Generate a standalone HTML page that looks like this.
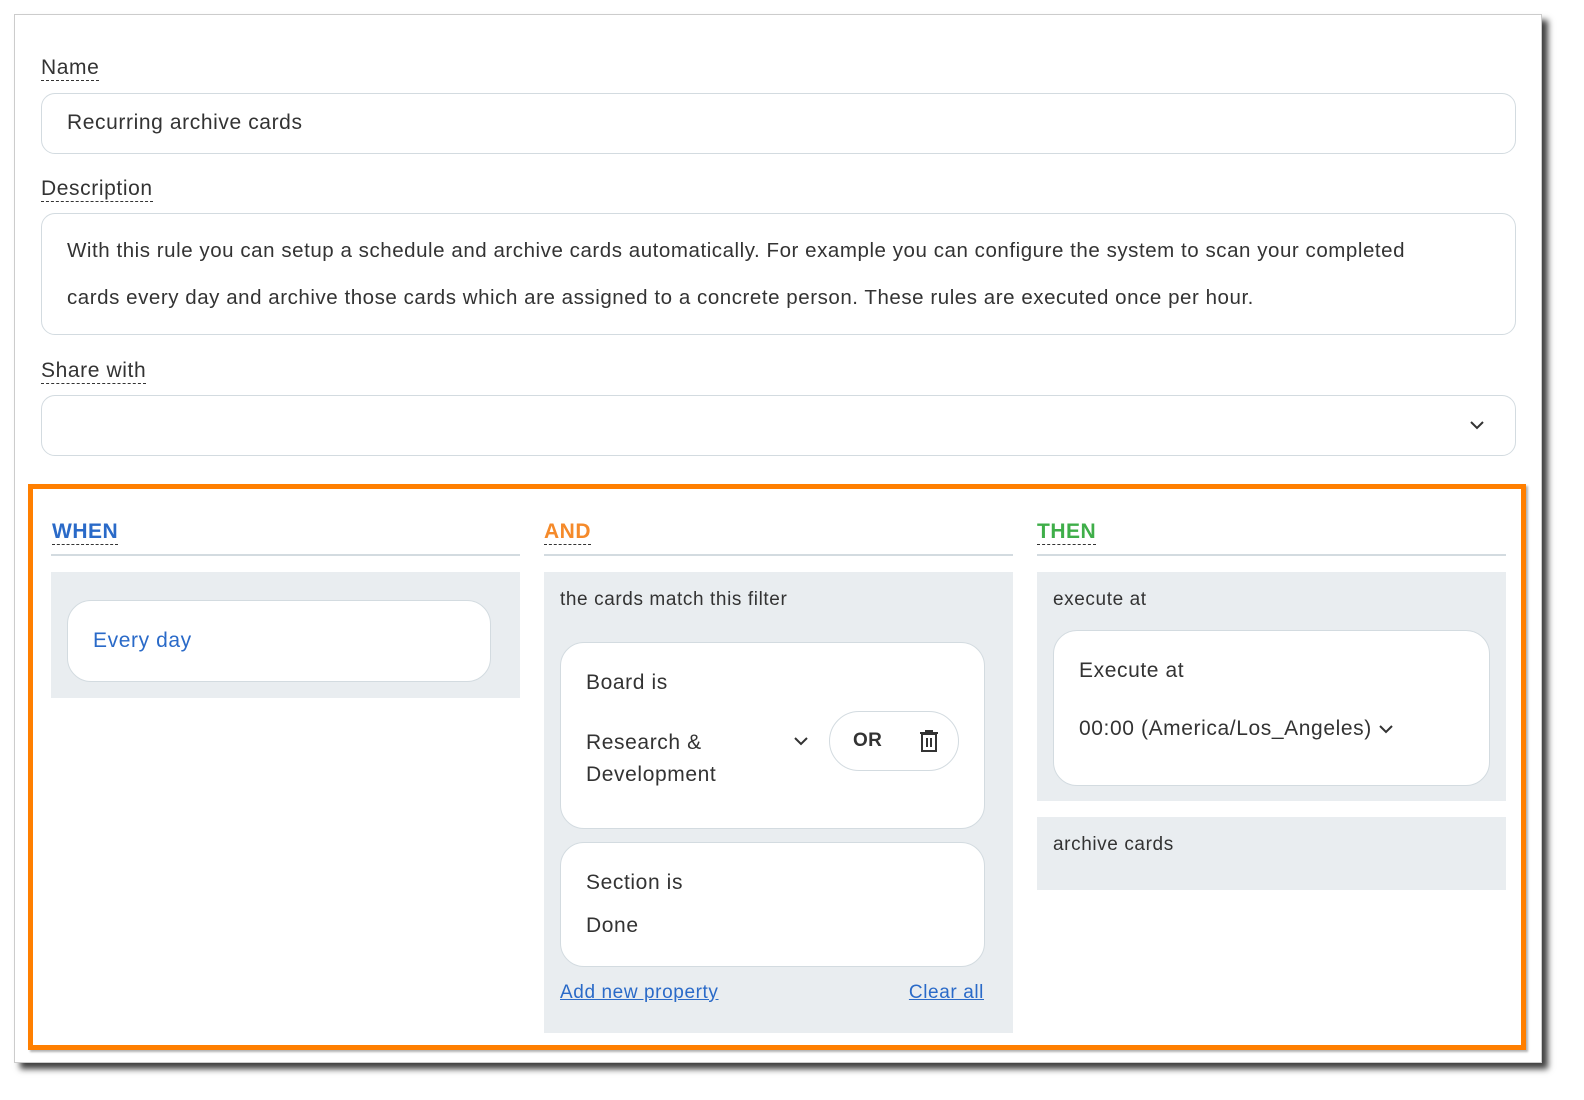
<!DOCTYPE html>
<html><head><meta charset="utf-8"><style>
*{box-sizing:border-box;margin:0;padding:0}
body{width:1584px;height:1100px;background:#fff;font-family:"Liberation Sans",sans-serif;color:#333;position:relative;overflow:hidden;letter-spacing:0.6px}
.card{position:absolute;left:14px;top:14px;width:1528px;height:1049px;background:#fff;border:1px solid #ccc;box-shadow:6px 6px 6px rgba(0,0,0,.75)}
.a{position:absolute;white-space:nowrap}
.lbl{font-size:21px;color:#333;border-bottom:1.5px dashed #333;line-height:24px}
.inp{border:1px solid #d3dbe0;border-radius:14px;background:#fff}
.t{font-size:21px;color:#333}
.hd{font-size:21px;font-weight:bold;border-bottom:1.5px dashed #333;line-height:24px;letter-spacing:0.5px}
.rule{height:2px;background:#d3dbe0}
.gray{background:#e9edf0}
.wc{background:#fff;border:1px solid #d3dbe0;border-radius:24px}
.lnk{color:#2a6ac8;font-size:19px;text-decoration:underline}
</style></head><body>
<div class="card"></div>
<div class="a lbl" style="left:41px;top:56px">Name</div>
<div class="a inp" style="left:41px;top:93px;width:1475px;height:61px"></div>
<div class="a t" style="left:67px;top:111px">Recurring archive cards</div>
<div class="a lbl" style="left:41px;top:177px">Description</div>
<div class="a inp" style="left:41px;top:213px;width:1475px;height:122px"></div>
<div class="a t" style="left:67px;top:227px;line-height:47px;font-size:20.5px;letter-spacing:0.55px">With this rule you can setup a schedule and archive cards automatically. For example you can configure the system to scan your completed<br>cards every day and archive those cards which are assigned to a concrete person. These rules are executed once per hour.</div>
<div class="a lbl" style="left:41px;top:359px">Share with</div>
<div class="a inp" style="left:41px;top:395px;width:1475px;height:61px"></div>
<svg class="a" style="left:1468px;top:418px" width="18" height="14"><path d="M3 4l6 6 6-6" fill="none" stroke="#333" stroke-width="2"/></svg>

<div class="a" style="left:28px;top:484px;width:1498px;height:566px;border:5px solid #ff7f00;box-shadow:2px 2px 2px rgba(0,0,0,.3)"></div>

<div class="a hd" style="left:52px;top:520px;color:#2a6ac8">WHEN</div>
<div class="a rule" style="left:51px;top:554px;width:469px"></div>
<div class="a gray" style="left:51px;top:572px;width:469px;height:126px"></div>
<div class="a wc" style="left:67px;top:600px;width:424px;height:82px"></div>
<div class="a" style="left:93px;top:629px;font-size:21px;color:#2a6ac8">Every day</div>

<div class="a hd" style="left:544px;top:520px;color:#f58a2a">AND</div>
<div class="a rule" style="left:544px;top:554px;width:469px"></div>
<div class="a gray" style="left:544px;top:572px;width:469px;height:461px"></div>
<div class="a" style="left:560px;top:589px;font-size:19px;color:#333">the cards match this filter</div>
<div class="a wc" style="left:560px;top:642px;width:425px;height:187px"></div>
<div class="a t" style="left:586px;top:671px">Board is</div>
<div class="a t" style="left:586px;top:727px;line-height:32px">Research &amp;<br>Development</div>
<svg class="a" style="left:792px;top:734px" width="18" height="14"><path d="M3 4l6 6 6-6" fill="none" stroke="#333" stroke-width="2"/></svg>
<div class="a" style="left:829px;top:711px;width:130px;height:60px;border:1px solid #d3dbe0;border-radius:30px;background:#fff"></div>
<div class="a" style="left:853px;top:730px;font-size:19px;font-weight:bold;color:#333;letter-spacing:0.3px">OR</div>
<svg class="a" style="left:918px;top:729px" width="22" height="24"><path d="M2 4h18M8 4V2h6v2M4 5h14v17H4zM9 9v9M13 9v9" fill="none" stroke="#333" stroke-width="2"/></svg>
<div class="a wc" style="left:560px;top:842px;width:425px;height:125px"></div>
<div class="a t" style="left:586px;top:871px">Section is</div>
<div class="a t" style="left:586px;top:914px">Done</div>
<div class="a lnk" style="left:560px;top:982px">Add new property</div>
<div class="a lnk" style="right:600px;top:982px">Clear all</div>

<div class="a hd" style="left:1037px;top:520px;color:#3fae49">THEN</div>
<div class="a rule" style="left:1037px;top:554px;width:469px"></div>
<div class="a gray" style="left:1037px;top:572px;width:469px;height:229px"></div>
<div class="a" style="left:1053px;top:589px;font-size:19px;color:#333">execute at</div>
<div class="a wc" style="left:1053px;top:630px;width:437px;height:156px"></div>
<div class="a t" style="left:1079px;top:659px">Execute at</div>
<div class="a t" style="left:1079px;top:717px">00:00 (America/Los_Angeles)</div>
<svg class="a" style="left:1377px;top:722px" width="18" height="14"><path d="M3 4l6 6 6-6" fill="none" stroke="#333" stroke-width="2"/></svg>
<div class="a gray" style="left:1037px;top:817px;width:469px;height:73px"></div>
<div class="a" style="left:1053px;top:834px;font-size:19px;color:#333">archive cards</div>
</body></html>
